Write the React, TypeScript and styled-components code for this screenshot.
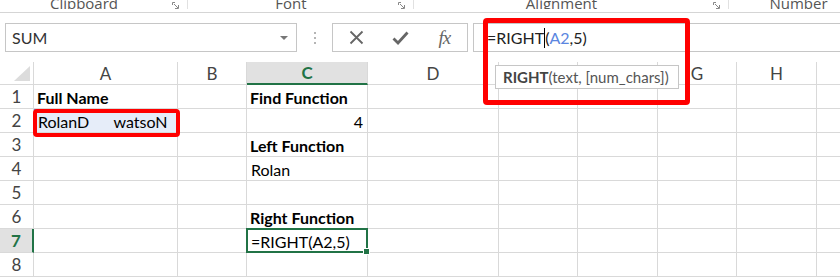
import React from 'react'
import styled, { createGlobalStyle } from 'styled-components'

const CELL_FONT = `Lato, "Liberation Sans", sans-serif`
const UI_FONT = `"Open Sans", "Noto Sans", sans-serif`
const GREEN = '#217346'
const GRID = '#d9d9d9'

const GlobalStyle = createGlobalStyle`
  html, body { margin: 0; padding: 0; background: #fff; }
  body { font-family: ${CELL_FONT}; overflow: hidden; }
`

const Page = styled.div`
  position: relative;
  width: 840px;
  height: 278px;
  overflow: hidden;
`

// ribbon group labels (cut off at the top)
const Ribbon = styled.div`
  display: flex;
  height: 12px;
  border-bottom: 1px solid #d5d5d5;
  overflow: hidden;
`
const Group = styled.div<{ $w: number }>`
  flex: 0 0 ${p => p.$w}px;
  height: 9px;
  display: flex;
  align-items: flex-start;
  border-right: 1px solid #e1e1e1;
  box-sizing: border-box;
  overflow: hidden;
`
const GroupLabel = styled.div`
  flex: 1;
  text-align: center;
  margin-top: -5px;
  font: 15px/16px ${UI_FONT};
  color: #555;
  white-space: nowrap;
`
const Launcher = styled.svg`
  flex: 0 0 7px;
  margin: 2px 8px 0 4px;
`

// formula bar
const FormulaRow = styled.div`
  display: flex;
  align-items: center;
  height: 29px;
  margin-top: 10px;
`
const NameBox = styled.div`
  margin-left: 5px;
  width: 292px;
  height: 29px;
  box-sizing: border-box;
  border: 1px solid #c6c6c6;
  display: flex;
  align-items: center;
  justify-content: space-between;
  padding: 0 8px 0 6px;
  font: 16px ${CELL_FONT};
  color: #333;
`
const DropArrow = styled.span`
  width: 0;
  height: 0;
  border-left: 4px solid transparent;
  border-right: 4px solid transparent;
  border-top: 4px solid #777;
`
const Dots = styled.div`
  margin-left: 17px;
  display: flex;
  flex-direction: column;
  gap: 3px;
  span {
    width: 2px;
    height: 2px;
    background: #b5b5b5;
  }
`
const ButtonBox = styled.div`
  margin-left: 16px;
  width: 136px;
  height: 29px;
  box-sizing: border-box;
  border: 1px solid #c6c6c6;
  display: flex;
  align-items: center;
  padding-left: 2px;
`
const BarButton = styled.div<{ $w: number }>`
  width: ${p => p.$w}px;
  display: flex;
  justify-content: center;
  align-items: center;
  color: #666;
`
const Fx = styled.span`
  font: italic 19px "Liberation Serif", serif;
  color: #666;
  letter-spacing: -1px;
`
const FormulaInput = styled.div`
  margin-left: 5px;
  flex: 1;
  height: 29px;
  box-sizing: border-box;
  border: 1px solid #c6c6c6;
  border-right: none;
  display: flex;
  align-items: center;
  padding-left: 13px;
  font: 16px ${CELL_FONT};
  color: #222;
  white-space: pre;
`
const RefText = styled.span`
  color: #5b86e0;
`
const Caret = styled.span`
  display: inline-block;
  width: 1px;
  height: 20px;
  background: #000;
`

// sheet grid
const Sheet = styled.div`
  margin-top: 10px;
  display: grid;
  grid-template-columns: 34px 144px 69px 121px 131px 79px 80px 79px 80px 80px;
  grid-template-rows: 23px repeat(8, 24px);
`
const Corner = styled.div`
  display: flex;
  justify-content: flex-end;
  align-items: flex-end;
  padding: 0 3px 3px 0;
  box-sizing: border-box;
  border-right: 1px solid ${GRID};
  border-bottom: 1px solid ${GRID};
`
const ColHead = styled.div<{ $active?: boolean }>`
  display: flex;
  justify-content: center;
  align-items: center;
  box-sizing: border-box;
  border-right: 1px solid ${GRID};
  border-bottom: ${p => (p.$active ? `2px solid ${GREEN}` : `1px solid ${GRID}`)};
  background: ${p => (p.$active ? '#e1e1e1' : '#fff')};
  color: ${p => (p.$active ? GREEN : '#444')};
  font: ${p => (p.$active ? 'bold' : 'normal')} 17px ${CELL_FONT};
`
const RowHead = styled.div<{ $active?: boolean }>`
  display: flex;
  justify-content: center;
  align-items: center;
  box-sizing: border-box;
  border-right: ${p => (p.$active ? `2px solid ${GREEN}` : `1px solid ${GRID}`)};
  border-bottom: 1px solid ${GRID};
  background: ${p => (p.$active ? '#e1e1e1' : '#fff')};
  color: ${p => (p.$active ? GREEN : '#444')};
  font: ${p => (p.$active ? 'bold' : 'normal')} 17px ${CELL_FONT};
`
const Cell = styled.div<{ $bold?: boolean; $right?: boolean; $ref?: boolean; $sel?: boolean }>`
  position: relative;
  display: flex;
  align-items: flex-end;
  justify-content: ${p => (p.$right ? 'flex-end' : 'flex-start')};
  padding: 0 ${p => (p.$right ? 4 : 3)}px 0 ${p => (p.$bold ? 3 : 4)}px;
  box-sizing: border-box;
  border-right: 1px solid ${GRID};
  border-bottom: 1px solid ${GRID};
  background: ${p => (p.$ref ? '#e6edf9' : '#fff')};
  box-shadow: ${p => (p.$ref ? 'inset 0 1px 0 #5a8ee6' : 'none')};
  font: ${p => (p.$bold ? 'bold' : 'normal')} 16px/20px ${CELL_FONT};
  color: #000;
  white-space: pre;
  ${p =>
    p.$sel &&
    `
    &::after {
      content: '';
      position: absolute;
      inset: -1px -1px -1px -1px;
      border: 2px solid ${GREEN};
    }
    &::before {
      content: '';
      position: absolute;
      right: -3px;
      bottom: -3px;
      width: 5px;
      height: 5px;
      background: ${GREEN};
      border: 1px solid #fff;
      z-index: 1;
    }
  `}
`

// annotations laid over the screenshot
const RedFrame = styled.div<{ $x: number; $y: number; $w: number; $h: number; $t: number }>`
  position: absolute;
  left: ${p => p.$x}px;
  top: ${p => p.$y}px;
  width: ${p => p.$w}px;
  height: ${p => p.$h}px;
  box-sizing: border-box;
  border: ${p => p.$t}px solid #f00;
  border-radius: 4px;
  z-index: 3;
`
const Tip = styled.div`
  position: absolute;
  left: 495px;
  top: 65px;
  width: 184px;
  height: 24px;
  box-sizing: border-box;
  border: 1px solid #c6c6c6;
  background: #fff;
  display: flex;
  align-items: center;
  padding-left: 7px;
  font: 15px ${CELL_FONT};
  color: #555;
  white-space: pre;
  z-index: 2;
  b {
    color: #444;
  }
`

// E and F headers sit under the tooltip, so they show no letter
const columns = ['A', 'B', 'C', 'D', 'E', 'F', 'G', 'H', 'I']
const hiddenHeads = ['E', 'F']

type CellData = { text: string; bold?: boolean; right?: boolean; ref?: boolean; sel?: boolean }
const data: Record<string, CellData> = {
  A1: { text: 'Full Name', bold: true },
  C1: { text: 'Find Function', bold: true },
  A2: { text: 'RolanD      watsoN', ref: true },
  C2: { text: '4', right: true },
  C3: { text: 'Left Function', bold: true },
  C4: { text: 'Rolan' },
  C6: { text: 'Right Function', bold: true },
  C7: { text: '=RIGHT(A2,5)', sel: true },
}

const LauncherIcon = () => (
  <Launcher width="7" height="7" viewBox="0 0 7 7">
    <path d="M0.5 3V0.5H3M2 2L6 6M3 6.5H6.5V3" stroke="#888" strokeWidth="1" fill="none" />
  </Launcher>
)

const App: React.FC = () => {
  return (
    <Page>
      <GlobalStyle />
      <Ribbon>
        <Group $w={188}>
          <GroupLabel>Clipboard</GroupLabel>
          <LauncherIcon />
        </Group>
        <Group $w={226}>
          <GroupLabel>Font</GroupLabel>
          <LauncherIcon />
        </Group>
        <Group $w={315}>
          <GroupLabel>Alignment</GroupLabel>
          <LauncherIcon />
        </Group>
        <Group $w={140}>
          <GroupLabel>Number</GroupLabel>
        </Group>
      </Ribbon>

      <FormulaRow>
        <NameBox>
          SUM
          <DropArrow />
        </NameBox>
        <Dots>
          <span />
          <span />
          <span />
        </Dots>
        <ButtonBox>
          <BarButton $w={44}>
            <svg width="15" height="15" viewBox="0 0 15 15">
              <path d="M1.5 1.5L13.5 13.5M13.5 1.5L1.5 13.5" stroke="#666" strokeWidth="1.8" />
            </svg>
          </BarButton>
          <BarButton $w={44}>
            <svg width="17" height="14" viewBox="0 0 17 14">
              <path d="M1.5 7.5L6 12L15.5 1.5" stroke="#666" strokeWidth="2.8" fill="none" />
            </svg>
          </BarButton>
          <BarButton $w={46}>
            <Fx>fx</Fx>
          </BarButton>
        </ButtonBox>
        <FormulaInput>
          =RIGHT<Caret />(<RefText>A2</RefText>,5)
        </FormulaInput>
      </FormulaRow>

      <Sheet>
        <Corner>
          <svg width="16" height="15" viewBox="0 0 16 15">
            <polygon points="16,0 16,15 0,15" fill="#dcdcdc" />
          </svg>
        </Corner>
        {columns.map(c => (
          <ColHead key={c} $active={c === 'C'}>
            {hiddenHeads.includes(c) ? '' : c}
          </ColHead>
        ))}
        {[1, 2, 3, 4, 5, 6, 7, 8].map(r => (
          <React.Fragment key={r}>
            <RowHead $active={r === 7}>{r}</RowHead>
            {columns.map(c => {
              const d = data[`${c}${r}`]
              return (
                <Cell key={c} $bold={d?.bold} $right={d?.right} $ref={d?.ref} $sel={d?.sel}>
                  {d?.text}
                </Cell>
              )
            })}
          </React.Fragment>
        ))}
      </Sheet>

      <RedFrame $x={483} $y={18} $w={207} $h={87} $t={5} />
      <Tip>
        <b>RIGHT</b>(text, [num_chars])
      </Tip>
      <RedFrame $x={33} $y={109} $w={147} $h={28} $t={4} />
    </Page>
  )
}

export default App
